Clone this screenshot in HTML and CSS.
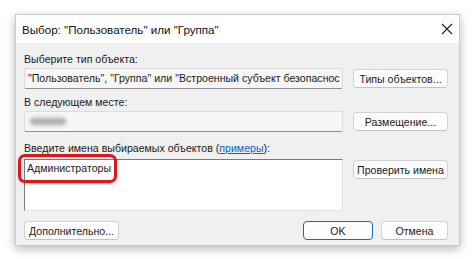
FILE: index.html
```html
<!DOCTYPE html>
<html lang="ru">
<head>
<meta charset="utf-8">
<link rel="stylesheet" href="styles.css">
</head>
<body>
<div class="dialog">
  <div class="titlebar">
    <span class="title">Выбор: "Пользователь" или "Группа"</span>
    <svg class="close" width="12" height="12" viewBox="0 0 12 12"><path d="M1 1L11 11M11 1L1 11" stroke="#222" stroke-width="1.1" fill="none"/></svg>
  </div>
  <div class="content">
    <div class="label">Выберите тип объекта:</div>
    <div class="row">
      <div class="field">"Пользователь", "Группа" или "Встроенный субъект безопаснос</div>
      <div class="btn">Типы объектов...</div>
    </div>
    <div class="label l2">В следующем месте:</div>
    <div class="row">
      <div class="field"><span class="blur"></span></div>
      <div class="btn">Размещение...</div>
    </div>
    <div class="label l3">Введите имена выбираемых объектов (<span class="link">примеры</span>):</div>
    <div class="row top">
      <div class="area"><span class="names">Администраторы</span><span class="mark"></span></div>
      <div class="btn">Проверить имена</div>
    </div>
    <div class="footer">
      <div class="btn wide">Дополнительно...</div>
      <div class="right">
        <div class="btn ok">OK</div>
        <div class="btn cancel">Отмена</div>
      </div>
    </div>
  </div>
</div>
</body>
</html>
```
FILE: styles.css
```css
* { box-sizing: border-box; }
html, body { margin: 0; padding: 0; background: #fff; }
body {
  font-family: "Liberation Sans", Arial, sans-serif;
  font-size: 10.6px;
  color: #1b1b1b;
  width: 474px;
  height: 259px;
  overflow: hidden;
}
.dialog {
  margin: 14px 0 0 15px;
  width: 445px;
  height: 232px;
  border: 1px solid #c9c9c9;
  box-shadow: 0 3px 9px rgba(0,0,0,0.28);
  background: #f0f0f0;
  display: flex;
  flex-direction: column;
}
.titlebar {
  height: 28px;
  background: #fff;
  display: flex;
  align-items: center;
  justify-content: space-between;
  padding: 0 6px 0 6px;
  font-size: 11.6px;
  color: #111;
}
.content {
  flex: 1;
  padding: 9px 11px 0 8px;
  display: flex;
  flex-direction: column;
}
.label { height: 14px; line-height: 14px; margin-bottom: 2px; }
.l2 { margin-top: 6px; }
.l3 { margin-top: 9px; margin-bottom: 4px; }
.link { color: #0a5fc6; text-decoration: underline; }
.row {
  display: flex;
  align-items: center;
  gap: 10px;
}
.row.top { align-items: flex-start; }
.field {
  width: 319px;
  height: 21px;
  background: #f6f6f6;
  border: 1px solid #dcdcdc;
  border-bottom: 1px solid #8e8e8e;
  border-radius: 2px;
  padding: 0 3px;
  line-height: 19px;
  white-space: nowrap;
  overflow: hidden;
  display: flex;
  align-items: center;
}
.blur {
  display: block;
  width: 36px;
  height: 7px;
  margin-left: 2px;
  background: #a9a9a9;
  border-radius: 4px;
  filter: blur(2px);
}
.btn {
  width: 95px;
  height: 19px;
  background: #fdfdfd;
  border: 1px solid #d3d3d3;
  border-bottom-color: #c2c2c2;
  border-radius: 4px;
  display: flex;
  align-items: center;
  justify-content: center;
  white-space: nowrap;
  flex: none;
}
.row.top .btn { margin-top: 1px; }
.area {
  position: relative;
  width: 319px;
  height: 52px;
  background: #fff;
  border-top: 1px solid #7a7a7a;
  border-left: 1px solid #7a7a7a;
  border-right: 1px solid #e3e3e3;
  border-bottom: 1px solid #e3e3e3;
  padding: 1px 2px;
  line-height: 14px;
}
.mark {
  position: absolute;
  left: -7px;
  top: -6px;
  width: 99px;
  height: 29px;
  border: 3px solid #e0161b;
  border-radius: 7px;
  box-shadow: 0 1px 2px rgba(0,0,0,0.25);
}
.footer {
  margin-top: 10px;
  display: flex;
  justify-content: space-between;
}
.right { display: flex; gap: 8px; }
.btn.ok {
  width: 70px;
  border: 1.5px solid #0f6cbd;
}
.btn.cancel { width: 67px; }
```
